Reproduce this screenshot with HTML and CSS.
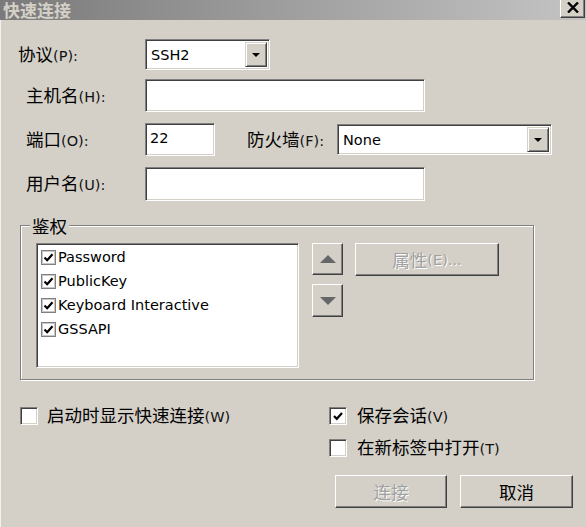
FILE: index.html
```html
<!DOCTYPE html>
<html lang="zh-CN">
<head>
<meta charset="utf-8">
<title>快速连接</title>
<link rel="stylesheet" href="styles.css">
</head>
<body>
<div class="window">
  <div class="titlebar">
    <span class="title">快速连接</span>
    <span class="close"><svg width="12" height="11" viewBox="0 0 12 11"><path d="M1 0.5 L11 10.5 M11 0.5 L1 10.5" stroke="#000" stroke-width="2.4" fill="none"/></svg></span>
  </div>
  <div class="content">
    <div class="row row1">
      <span class="lbl lbl1"><span class="zh">协议</span>(P):</span>
      <div class="combo combo1">
        <span class="val">SSH2</span>
        <span class="ddbtn"><svg width="8" height="4" viewBox="0 0 8 4"><polygon points="0,0 8,0 4,4" fill="#000"/></svg></span>
      </div>
    </div>
    <div class="row row2">
      <span class="lbl lbl2"><span class="zh">主机名</span>(H):</span>
      <div class="field wide"></div>
    </div>
    <div class="row row3">
      <span class="lbl lbl2"><span class="zh">端口</span>(O):</span>
      <div class="field port"><span class="val">22</span></div>
      <span class="lbl lbl3"><span class="zh">防火墙</span>(F):</span>
      <div class="combo combo2">
        <span class="val">None</span>
        <span class="ddbtn"><svg width="8" height="4" viewBox="0 0 8 4"><polygon points="0,0 8,0 4,4" fill="#000"/></svg></span>
      </div>
    </div>
    <div class="row row4">
      <span class="lbl lbl2"><span class="zh">用户名</span>(U):</span>
      <div class="field wide"></div>
    </div>

    <div class="group">
      <span class="legend zh">鉴权</span>
      <div class="listbox">
        <div class="item"><span class="lcb"><svg width="13" height="13" viewBox="0 0 13 13"><path d="M2.5 6.5 L5.2 9.2 L10.5 3.2" stroke="#000" stroke-width="2.2" fill="none"/></svg></span>Password</div>
        <div class="item"><span class="lcb"><svg width="13" height="13" viewBox="0 0 13 13"><path d="M2.5 6.5 L5.2 9.2 L10.5 3.2" stroke="#000" stroke-width="2.2" fill="none"/></svg></span>PublicKey</div>
        <div class="item"><span class="lcb"><svg width="13" height="13" viewBox="0 0 13 13"><path d="M2.5 6.5 L5.2 9.2 L10.5 3.2" stroke="#000" stroke-width="2.2" fill="none"/></svg></span>Keyboard Interactive</div>
        <div class="item"><span class="lcb"><svg width="13" height="13" viewBox="0 0 13 13"><path d="M2.5 6.5 L5.2 9.2 L10.5 3.2" stroke="#000" stroke-width="2.2" fill="none"/></svg></span>GSSAPI</div>
      </div>
      <div class="arrows">
        <button class="btn arrow up"><svg width="16" height="8" viewBox="0 0 16 8"><polygon points="0,8 16,8 8,0" fill="#666"/></svg></button>
        <button class="btn arrow down"><svg width="16" height="8" viewBox="0 0 16 8"><polygon points="0,0 16,0 8,8" fill="#666"/></svg></button>
      </div>
      <button class="btn props dis"><span class="zh">属性</span>(E)...</button>
    </div>

    <div class="bottom">
      <div class="bl">
        <label class="chk"><span class="cb"></span><span class="txt"><span class="zh">启动时显示快速连接</span>(W)</span></label>
      </div>
      <div class="br">
        <label class="chk"><span class="cb"><svg width="12" height="12" viewBox="0 0 12 12"><path d="M2 6 L4.8 8.8 L10 3" stroke="#000" stroke-width="2.2" fill="none"/></svg></span><span class="txt"><span class="zh">保存会话</span>(V)</span></label>
        <label class="chk chk2"><span class="cb"></span><span class="txt"><span class="zh">在新标签中打开</span>(T)</span></label>
        <div class="btns">
          <button class="btn act dis connect"><span class="zh">连接</span></button>
          <button class="btn act cancel"><span class="zh">取消</span></button>
        </div>
      </div>
    </div>
  </div>
</div>
</body>
</html>
```

FILE: styles.css
```css
* { box-sizing: border-box; }
html, body { margin: 0; padding: 0; }
body {
  width: 586px;
  height: 527px;
  overflow: hidden;
  background: #d4d0c8;
  font-family: "DejaVu Sans", "Noto Sans CJK SC", sans-serif;
  font-size: 14.5px;
  line-height: 18px;
  color: #111;
}
.zh { font-family: "Noto Sans CJK SC", sans-serif; font-size: 17.5px; color: #000; }

.window { width: 586px; height: 527px; display: flex; flex-direction: column; background: #d4d0c8; }

.titlebar {
  height: 20px;
  flex: none;
  display: flex;
  justify-content: space-between;
  align-items: flex-start;
  background: linear-gradient(to right, #7a7a7a, #c4c4c4);
}
.title {
  font-family: "Noto Sans CJK SC", sans-serif;
  font-weight: bold;
  font-size: 17px;
  line-height: 20px;
  color: #d4d0c8;
  padding-left: 3px;
}
.close {
  width: 25px;
  height: 18px;
  margin-right: 1px;
  background: #d4d0c8;
  border-left: 1px solid #fff;
  border-right: 1px solid #404040;
  border-bottom: 1px solid #404040;
  box-shadow: inset -1px -1px 0 #808080;
  display: flex;
  align-items: center;
  justify-content: center;
  padding-bottom: 2px;
}

.content { flex: 1; box-shadow: inset 1px 0 0 #f2f2f2; }

.row { display: flex; align-items: center; }
.row1 { margin-top: 19px; height: 31px; padding-left: 18px; }
.row2 { margin-top: 9px; height: 33px; padding-left: 26px; }
.row3 { margin-top: 11px; height: 33px; padding-left: 26px; }
.row4 { margin-top: 11px; height: 34px; padding-left: 26px; }
.lbl1 { width: 127px; }
.lbl2 { width: 119px; }
.lbl3 { width: 90px; margin-left: 32px; }

.field, .combo {
  height: 100%;
  background: #fff;
  border: 1px solid;
  border-color: #808080 #fff #fff #808080;
  box-shadow: inset 1px 1px 0 #404040, inset -1px -1px 0 #d4d0c8;
  display: flex;
  align-items: center;
  color: #000;
}
.wide { width: 280px; }
.port { width: 70px; padding-left: 4px; padding-bottom: 3px; }
.combo { padding: 2px; }
.combo .val { flex: 1; padding-left: 3px; }
.combo1 { width: 125px; height: 31px; }
.combo2 { width: 215px; height: 31px; }
.ddbtn {
  width: 22px;
  height: 100%;
  background: #d4d0c8;
  border: 1px solid;
  border-color: #d4d0c8 #404040 #404040 #d4d0c8;
  box-shadow: inset 1px 1px 0 #fff, inset -1px -1px 0 #808080;
  display: flex;
  align-items: center;
  justify-content: center;
}

.group {
  position: relative;
  margin-top: 24px;
  margin-left: 20px;
  width: 514px;
  height: 155px;
  border: 1px solid #808080;
  box-shadow: inset 1px 1px 0 #fff, 1px 1px 0 #fff;
  padding: 17px 0 0 15px;
  display: flex;
  align-items: flex-start;
}
.legend {
  position: absolute;
  left: 9px;
  top: -11px;
  padding: 0 2px;
  line-height: 22px;
  background: #d4d0c8;
}
.listbox {
  width: 263px;
  height: 125px;
  background: #fff;
  border: 1px solid;
  border-color: #808080 #fff #fff #808080;
  box-shadow: inset 1px 1px 0 #404040, inset -1px -1px 0 #d4d0c8;
  padding: 1px 0 0 4px;
  color: #000;
}
.item { height: 24px; display: flex; align-items: center; }
.lcb {
  width: 15px;
  height: 15px;
  margin-right: 2px;
  border: 1px solid #808080;
  box-shadow: inset 0 0 0 1px #c8c8c8;
  background: #fff;
  display: flex;
  align-items: center;
  justify-content: center;
}

.btn {
  font: inherit;
  padding: 0;
  margin: 0;
  background: #d4d0c8;
  border: 1px solid;
  border-color: #fff #404040 #404040 #fff;
  box-shadow: inset -1px -1px 0 #808080;
  display: flex;
  align-items: center;
  justify-content: center;
  color: #000;
}
.arrows { margin-left: 13px; display: flex; flex-direction: column; gap: 9px; }
.arrow { width: 31px; }
.up { height: 32px; }
.down { height: 33px; }
.props { margin-left: 12px; width: 144px; height: 33px; }
.dis, .dis .zh { color: #a0a0a0; text-shadow: 1px 1px 0 #fff; }

.bottom { display: flex; margin-top: 27px; }
.bl { width: 329px; padding-left: 20px; }
.br { display: flex; flex-direction: column; }
.chk { display: flex; align-items: center; height: 18px; }
.chk2 { margin-top: 14px; }
.cb {
  width: 18px;
  height: 18px;
  flex: none;
  background: #fff;
  border: 1px solid;
  border-color: #808080 #fff #fff #808080;
  box-shadow: inset 1px 1px 0 #404040, inset -1px -1px 0 #d4d0c8;
  display: flex;
  align-items: center;
  justify-content: center;
}
.chk .txt { margin-left: 9px; }
.br .chk .txt { margin-left: 10px; }
.btns { display: flex; gap: 13px; margin-top: 18px; margin-left: 6px; }
.act { height: 33px; }
.connect { width: 112px; }
.cancel { width: 113px; }
```
